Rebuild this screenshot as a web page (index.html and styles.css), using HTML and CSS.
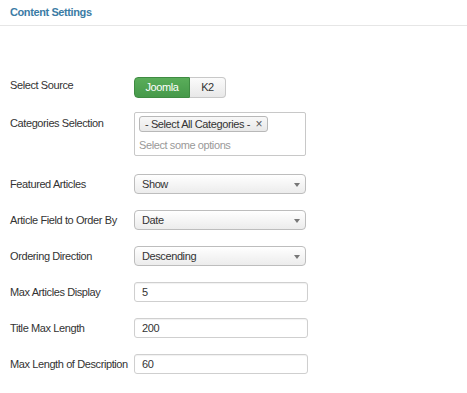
FILE: index.html
```html
<!DOCTYPE html>
<html lang="en">
<head>
    <meta charset="UTF-8">
    <meta name="viewport" content="width=device-width, initial-scale=1.0">
    <title>Content Settings</title>
    <link rel="stylesheet" href="styles.css">
</head>
<body>
    <header class="panel-head">
        <h1>Content Settings</h1>
    </header>

    <form class="settings">
        <div class="row row-source">
            <label>Select Source</label>
            <div class="btn-group">
                <span class="btn btn-active">Joomla</span>
                <span class="btn">K2</span>
            </div>
        </div>

        <div class="row row-cats">
            <label>Categories Selection</label>
            <div class="multi">
                <span class="tag">- Select All Categories - <b>&times;</b></span>
                <span class="placeholder">Select some options</span>
            </div>
        </div>

        <div class="row">
            <label>Featured Articles</label>
            <div class="select">Show <i class="caret"></i></div>
        </div>

        <div class="row">
            <label>Article Field to Order By</label>
            <div class="select">Date <i class="caret"></i></div>
        </div>

        <div class="row">
            <label>Ordering Direction</label>
            <div class="select">Descending <i class="caret"></i></div>
        </div>

        <div class="row">
            <label>Max Articles Display</label>
            <div class="input">5</div>
        </div>

        <div class="row">
            <label>Title Max Length</label>
            <div class="input">200</div>
        </div>

        <div class="row">
            <label>Max Length of Description</label>
            <div class="input">60</div>
        </div>
    </form>
</body>
</html>
```

FILE: styles.css
```css
body {
    font-family: "Liberation Sans", Arial, sans-serif;
    font-size: 11px;
    letter-spacing: -0.4px;
    color: #333;
    background-color: #fff;
    margin: 0;
}

.panel-head {
    height: 25px;
    border-bottom: 1px solid #e6e6e6;
    padding: 0 10px;
}

.panel-head h1 {
    margin: 0;
    font-size: 11px;
    line-height: 25px;
    color: #3b7ca5;
    font-weight: bold;
}

.settings {
    padding: 51px 0 0 10px;
}

.row {
    display: flex;
    align-items: flex-start;
    margin-bottom: 16px;
}

.row-source {
    margin-bottom: 14px;
}

.row-cats {
    margin-bottom: 18px;
}

.row label {
    width: 124px;
    flex-shrink: 0;
    padding-top: 3px;
    line-height: 14px;
    white-space: nowrap;
}

.row-source label {
    padding-top: 1px;
}

.row-cats label {
    padding-top: 4px;
}

.btn-group {
    display: flex;
    height: 21px;
}

.btn {
    box-sizing: border-box;
    height: 21px;
    line-height: 19px;
    text-align: center;
    border: 1px solid #c8c8c8;
    background: linear-gradient(#fbfbfb, #e8e8e8);
    color: #333;
}

.btn:first-child {
    width: 56px;
    border-radius: 4px 0 0 4px;
}

.btn:last-child {
    width: 36px;
    border-left: none;
    border-radius: 0 4px 4px 0;
}

.btn-active {
    background: linear-gradient(#5aad5a, #46994a);
    border-color: #3f8b42;
    color: #fff;
}

.multi {
    box-sizing: border-box;
    width: 172px;
    height: 44px;
    border: 1px solid #c8c8c8;
    border-radius: 2px;
    padding: 3px 4px;
    display: flex;
    flex-direction: column;
    align-items: flex-start;
}

.tag {
    box-sizing: border-box;
    height: 16px;
    line-height: 14px;
    padding: 0 5px;
    border: 1px solid #b8b8b8;
    border-radius: 3px;
    background: linear-gradient(#f8f8f8, #e8e8e8);
    white-space: nowrap;
}

.tag b {
    font-weight: normal;
    font-size: 12px;
    color: #555;
    margin-left: 3px;
}

.placeholder {
    color: #999;
    margin-top: 6px;
    line-height: 14px;
}

.select {
    box-sizing: border-box;
    position: relative;
    width: 172px;
    height: 20px;
    line-height: 18px;
    padding-left: 7px;
    border: 1px solid #bdbdbd;
    border-radius: 4px;
    background: linear-gradient(#ffffff, #ececec);
}

.caret {
    position: absolute;
    right: 5px;
    top: 8px;
    width: 0;
    height: 0;
    border-left: 3px solid transparent;
    border-right: 3px solid transparent;
    border-top: 4px solid #777;
}

.input {
    box-sizing: border-box;
    width: 174px;
    height: 20px;
    line-height: 18px;
    padding-left: 7px;
    border: 1px solid #cfcfcf;
    border-radius: 3px;
    box-shadow: inset 0 1px 1px rgba(0, 0, 0, 0.06);
}
```
